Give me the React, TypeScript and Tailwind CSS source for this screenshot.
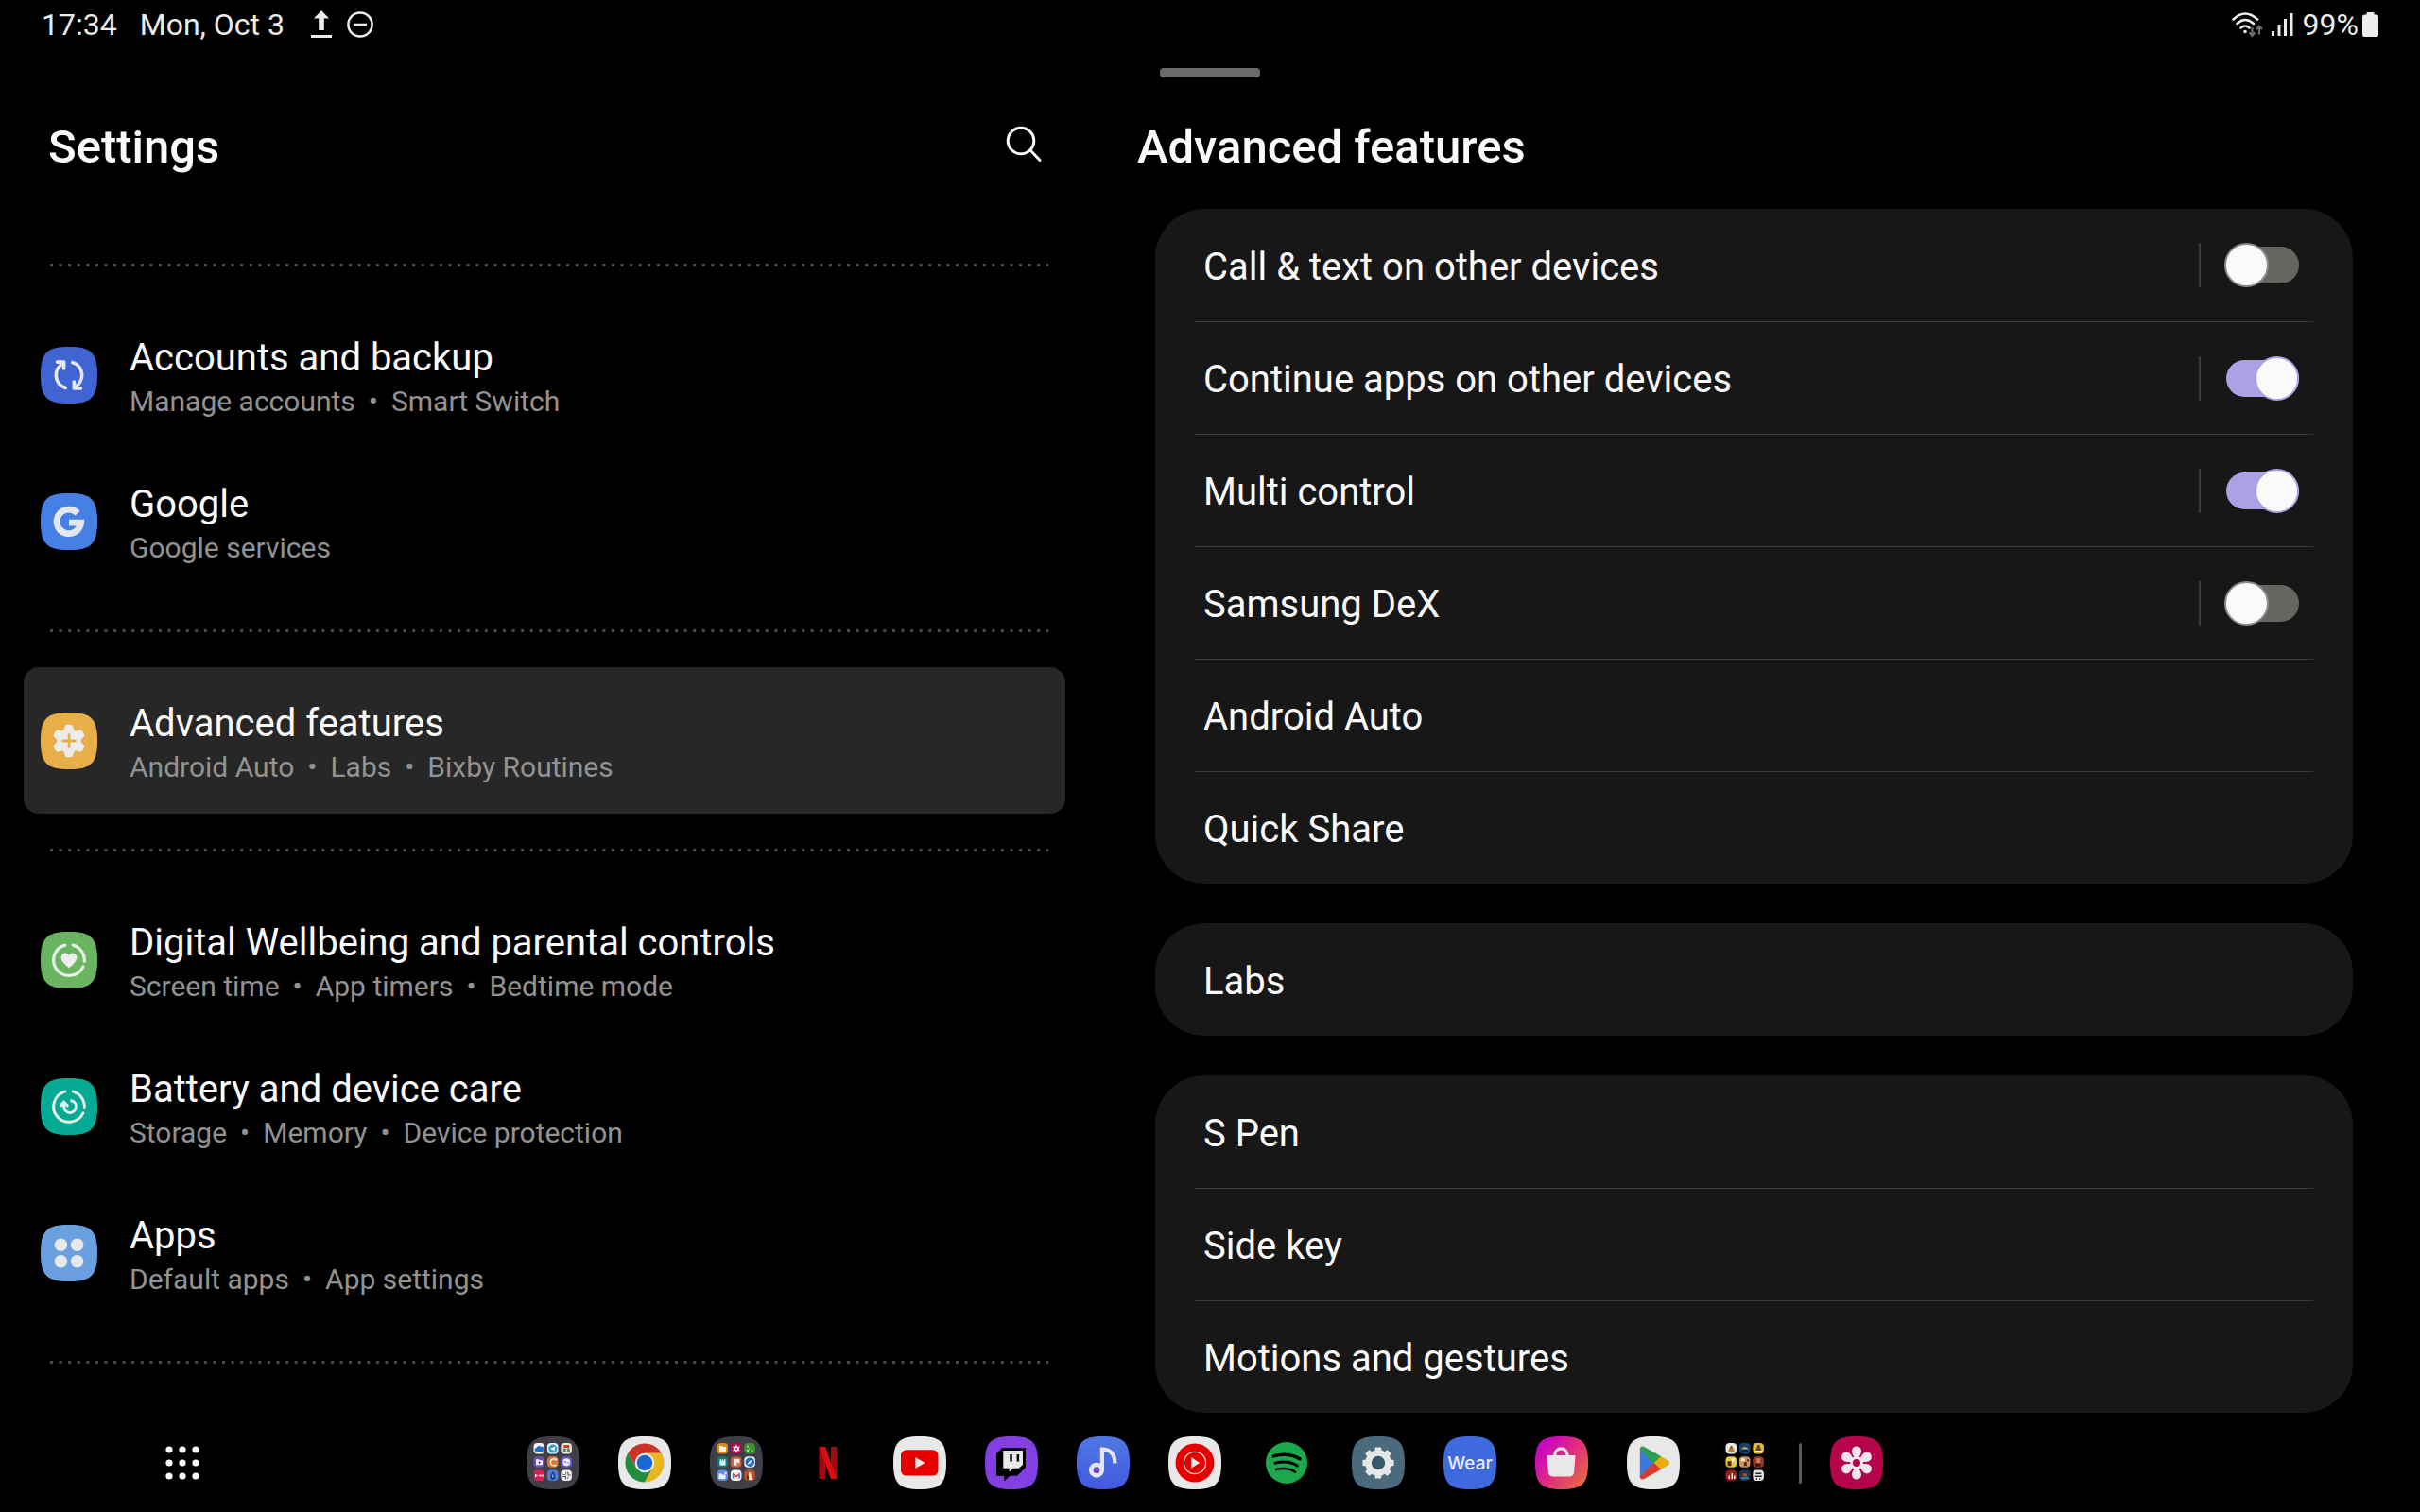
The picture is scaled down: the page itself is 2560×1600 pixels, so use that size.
import React, { useState } from 'react';

const SQUIRCLE = 'M0 28C0 6 6 0 28 0s28 6 28 28-6 28-28 28S0 50 0 28z';

function Tile({ fill, className = 'size-14', children }: { fill: string; className?: string; children?: React.ReactNode }) {
  return (
    <svg viewBox="0 0 56 56" className={className} aria-hidden="true">
      <path d={SQUIRCLE} fill={fill} />
      {children}
    </svg>
  );
}

/* ---------- settings list icons ---------- */

function AccountsIcon() {
  return (
    <Tile fill="#4065d3" className="size-15 shrink-0">
      <g fill="none" stroke="#e6e8f0" strokeWidth="3.4" strokeLinecap="round" strokeLinejoin="round">
        <path d="M24.5 40.6A13.2 13.2 0 0 1 22.5 16.2" />
        <path d="M16.4 15H23v6.4" />
        <path d="M31.5 15.4A13.2 13.2 0 0 1 33.5 39.8" />
        <path d="M39.6 41H33v-6.4" />
      </g>
    </Tile>
  );
}

function GoogleIcon() {
  return (
    <Tile fill="#4680e4" className="size-15 shrink-0">
      <path d="M36.5 19.7A11.9 11.9 0 1 0 39.7 29H28" fill="none" stroke="#e6e8f0" strokeWidth="6.4" />
    </Tile>
  );
}

function AdvancedIcon() {
  return (
    <Tile fill="#e8ae48" className="size-15 shrink-0">
      <g fill="#ebebeb">
        <circle cx="28" cy="28" r="11.8" />
        {[0, 60, 120, 180, 240, 300].map((a) => (
          <path key={a} d="M22.6 19l1.6-5.8q.4-1.4 1.8-1.4h4q1.400 0 1.800 1.400l1.600 5.800z" transform={`rotate(${a} 28 28)`} />
        ))}
      </g>
      <path d="M28 22v12M22 28h12" stroke="#e8ae48" strokeWidth="2.6" strokeLinecap="round" />
    </Tile>
  );
}

function Ring({ width }: { width: number }) {
  return (
    <g fill="none" stroke="#e4f2e4" strokeWidth={width} strokeLinecap="round">
      <path d="M24 13.2A15.3 15.3 0 1 0 41.9 34.5" />
      <path d="M32 13.2A15.3 15.3 0 0 1 43.2 29.3" />
    </g>
  );
}

function WellbeingIcon() {
  return (
    <Tile fill="#6bb462" className="size-15 shrink-0">
      <Ring width={3} />
      <path
        d="M28 35.6c-1.4-1-7.8-5.6-7.8-10.2 0-2.6 1.8-4.3 4-4.3 1.7 0 3 .9 3.8 2.3.8-1.4 2.1-2.3 3.8-2.3 2.2 0 4 1.7 4 4.3 0 4.6-6.4 9.2-7.8 10.2z"
        fill="#eeeeee"
      />
    </Tile>
  );
}

function BatteryCareIcon() {
  return (
    <Tile fill="#06a994" className="size-15 shrink-0">
      <Ring width={2.8} />
      <g fill="none" stroke="#e4f2f0" strokeWidth="2.8" strokeLinecap="round" strokeLinejoin="round">
        <path d="M23 25.5V28a6 6 0 1 0 7.5-5.8" />
        <path d="M19.8 27l3.2-3.6 3.4 3.6" />
      </g>
    </Tile>
  );
}

function AppsIcon() {
  return (
    <Tile fill="#6ba0e0" className="size-15 shrink-0">
      <g fill="#e6e8ec">
        <circle cx="20" cy="19.8" r="6.3" />
        <circle cx="36" cy="19.8" r="6.3" />
        <circle cx="20" cy="36.2" r="6.3" />
        <circle cx="36" cy="36.2" r="6.3" />
      </g>
    </Tile>
  );
}

/* ---------- dock icons ---------- */

type Mini = { bg: string; fg: string; d: string; fg2?: string; d2?: string };

// glyph paths are drawn inside a 12 x 12 cell
const workFolder: Mini[] = [
  { bg: '#f4f7fa', fg: '#1f6fc4', d: 'M3 9a2 2 0 0 1 0-4 3 3 0 0 1 5-1 2.5 2.5 0 0 1 1.5 5z' },
  { bg: '#e9f3f8', fg: '#2b9fd0', d: 'M6 1.5a4.5 4.5 0 1 1 0 9 4.5 4.5 0 0 1 0-9z', fg2: '#ffffff', d2: 'M3 6l5.5-2.5L7.5 8.5 5.5 7z' },
  { bg: '#efe9e2', fg: '#c8402f', d: 'M3 2h6v3H3z', fg2: '#5b8a6a', d2: 'M2.5 5.5h3v4h-3zM6.5 5.5h3v4h-3z' },
  { bg: '#6a4fb0', fg: '#f4f0fb', d: 'M2.5 3h3l1 1h3v5h-7z', fg2: '#6a4fb0', d2: 'M5.5 5h1v3h-1zM4.5 6h3v1h-3z' },
  { bg: '#e0702e', fg: '#f8e6d8', d: 'M11 3.5A4.5 4.5 0 1 0 10 9.5L8.5 8A2.5 2.5 0 1 1 9 5z' },
  { bg: '#6b52c2', fg: '#f1eefb', d: 'M6 2a4 4 0 1 1 0 8 4 4 0 0 1 0-8z', fg2: '#6b52c2', d2: 'M3 5.5q1.5-1 3 .5t3-.5v1q-1.5 1-3 0t-3 0z' },
  { bg: '#d81f52', fg: '#fbe4ea', d: 'M1.5 4.5h1.5v3H1.5zM4 5l1 1-1 1zM6 5h2v2H6zM8.8 5h2v2h-2z' },
  { bg: '#4f7fd8', fg: '#173a80', d: 'M6 1.5q3 3 2.5 6T6 10.5 3.5 8 6 1.5z', fg2: '#dfe9fb', d2: 'M5.5 5h1v3h-1z' },
  { bg: '#f2f2f2', fg: '#2fa67a', d: 'M5 2h1v3H5zM2 4.5h3v1H2zM7 7h1v3H7z', fg2: '#7a2a60', d2: 'M7 2h1v3H7zM7.5 5h3v1h-3zM2 6.5h3v1H2zM4.5 7h1v3h-1z' },
];

const toolsFolder: Mini[] = [
  { bg: '#d88a1c', fg: '#fdf3e0', d: 'M2.5 3h3l1 1h3v5h-7z' },
  { bg: '#b8084e', fg: '#fbe6ee', d: 'M6 1.5l1.2 2.3 2.7-.1L8.6 6l1.3 2.3-2.7-.1L6 10.5 4.8 8.2l-2.7.1L3.4 6 2.1 3.7l2.7.1z', fg2: '#b8084e', d2: 'M6 5a1 1 0 1 1 0 2 1 1 0 0 1 0-2z' },
  { bg: '#3f8f2c', fg: '#dff2d8', d: 'M3 2.5h1.2v2H3zM3 7h1.5v2H3zM7.5 7H9v2H7.5zM5 5.5h1v1H5z' },
  { bg: '#127a78', fg: '#dcf3f2', d: 'M3 3h6v6.5H3z', fg2: '#127a78', d2: 'M4.5 2.5h.8V5h-.8zM6.7 2.5h.8V5h-.8z' },
  { bg: '#cf5a36', fg: '#fcebe4', d: 'M3 2.5h6.5V7L7 9.5H3z', fg2: '#cf5a36', d2: 'M6.5 6.5h3L6.5 9.5z' },
  { bg: '#f0f4fa', fg: '#1f6fc4', d: 'M6 1.2a4.8 4.8 0 1 1 0 9.6 4.8 4.8 0 0 1 0-9.6z', fg2: '#ffffff', d2: 'M9 3L6.8 6.8 3 9l2.2-3.8z' },
  { bg: '#5f8fe0', fg: '#e8f0fd', d: 'M2 4h3l1 1h3v4.5H2z', fg2: '#e8f0fd', d2: 'M8 2.5h2v2H8z' },
  { bg: '#f4f4f4', fg: '#d93a2f', d: 'M2 3l4 3 4-3v2L6 8 2 5z', fg2: '#3a74d8', d2: 'M2 4.5h1.5V9H2zM8.5 4.5H10V9H8.5z' },
  { bg: '#b8502c', fg: '#f4d8c4', d: 'M5 2q3 1 2.5 4L9 10.5H4.5z', fg2: '#5a2414', d2: 'M3 6h1.5v4.5H3z' },
];

const gamesFolder: Mini[] = [
  { bg: '#ece8dc', fg: '#c87838', d: 'M3 7q3-6 6 0v2H3z', fg2: '#3c6a3a', d2: 'M5 3h2v3H5z' },
  { bg: '#184468', fg: '#c0a468', d: 'M2 6.5q4-5 8 0z', fg2: '#0c2438', d2: 'M3 7h6v2H3z' },
  { bg: '#e8b838', fg: '#5a4a3a', d: 'M5 2h2l2 6H3z', fg2: '#fdf6dc', d2: 'M2.5 8h7v1.5h-7z' },
  { bg: '#e8c83c', fg: '#5c1c14', d: 'M2 5h4v5H2z', fg2: '#fbf2d0', d2: 'M6.5 2H9v4H6.5z' },
  { bg: '#c8945c', fg: '#f4e4c8', d: 'M2 2h4v3H2z', fg2: '#4c2c1c', d2: 'M5 6h3v4H5zM8 3h2v2H8z' },
  { bg: '#8c3c28', fg: '#d87850', d: 'M4 2h4v5H4z', fg2: '#3c1410', d2: 'M3 7.5h5v3H3z' },
  { bg: '#981c1c', fg: '#f8e8e8', d: 'M3 6h1.5v3.5H3zM6 3.5h1.5v6H6zM8.5 6H10v3.5H8.5z' },
  { bg: '#1c3450', fg: '#a85040', d: 'M4 4h4v3H4z', fg2: '#5888b0', d2: 'M2 8h8v1.5H2z' },
  { bg: '#e4e4e4', fg: '#282828', d: 'M3 3h6v1.5H3zM2.5 6h7v1.5h-7z', fg2: '#484848', d2: 'M3.5 8.5h1.2v2H3.5zM7 8.5h1.2v2H7z' },
];

function Folder({ fill, items }: { fill: string; items: Mini[] }) {
  return (
    <Tile fill={fill}>
      {items.map((m, i) => (
        <g key={i} transform={`translate(${7.5 + (i % 3) * 14.4} ${7 + Math.floor(i / 3) * 14.2})`}>
          <rect width="11.6" height="11.6" rx="4" fill={m.bg} />
          <path d={m.d} fill={m.fg} />
          {m.d2 && <path d={m.d2} fill={m.fg2} />}
        </g>
      ))}
    </Tile>
  );
}

function ChromeIcon() {
  const slice = 'M45.8 17.8A20.5 20.5 0 0 0 10.3 17.7L19.2 33.1 28 28V17.8z';
  return (
    <Tile fill="#e8e8e8">
      <path d={slice} fill="#cc3327" />
      <path d={slice} fill="#1e8e3e" transform="rotate(-120 28 28)" />
      <path d={slice} fill="#e8b71c" transform="rotate(120 28 28)" />
      <circle cx="28" cy="28" r="10.3" fill="#e8e8e8" />
      <circle cx="28" cy="28" r="8.2" fill="#1967d2" />
    </Tile>
  );
}

function NetflixIcon() {
  return (
    <svg viewBox="0 0 56 56" className="size-14" aria-hidden="true">
      <rect x="18.5" y="11" width="6.5" height="34" fill="#a00a10" />
      <rect x="31" y="11" width="6.5" height="34" fill="#a00a10" />
      <path d="M18.5 11H25L37.5 45H31z" fill="#da0c14" />
    </svg>
  );
}

function YouTubeIcon() {
  return (
    <Tile fill="#e8e8e8">
      <rect x="8" y="14.3" width="39.5" height="27.2" rx="5.5" fill="#e60000" />
      <path d="M23.3 22v12L33.6 28z" fill="#e8e8e8" />
    </Tile>
  );
}

function TwitchIcon() {
  return (
    <Tile fill="#843fe2">
      <path d="M18 12.3H43V32.7L34 41.7H26.3L20.3 47.6V41.7H12V18.3z" fill="#000" />
      <path d="M19.3 15H40V30L35.7 33.7H29.7L25.7 37.7V33.7H19.3z" fill="#e8e8e8" />
      <path d="M26.3 19h2.5v7.4h-2.5zM33.6 19h2.5v7.4h-2.5z" fill="#000" />
    </Tile>
  );
}

function MusicIcon() {
  return (
    <Tile fill="url(#music)">
      <defs>
        <linearGradient id="music" x1="0" y1="0" x2="0" y2="1">
          <stop offset="0" stopColor="#4f78e4" />
          <stop offset="1" stopColor="#4259e0" />
        </linearGradient>
      </defs>
      <path d="M26.9 35.5V13.6C34.5 13.6 40.4 18 40.4 28.5" fill="none" stroke="#e4e6f2" strokeWidth="4.2" />
      <circle cx="21" cy="35.7" r="5.7" fill="#6a48b8" stroke="#e4e6f2" strokeWidth="4.6" />
    </Tile>
  );
}

function YouTubeMusicIcon() {
  return (
    <Tile fill="#e8e8e8">
      <circle cx="28" cy="28" r="20.5" fill="#e60000" />
      <circle cx="28" cy="28" r="11.6" fill="none" stroke="#f0dcdc" strokeWidth="1.3" />
      <path d="M24.3 22.3v11.2l9-5.6z" fill="#e8e8e8" />
    </Tile>
  );
}

function SpotifyIcon() {
  return (
    <svg viewBox="0 0 56 56" className="size-14" aria-hidden="true">
      <circle cx="28" cy="28" r="22" fill="#1ba94c" />
      <g fill="none" stroke="#000" strokeLinecap="round">
        <path d="M14.5 20.8Q30 16.6 42 23.8" strokeWidth="3.6" />
        <path d="M16 28.2Q29.5 24.8 39.4 31" strokeWidth="3" />
        <path d="M17 35Q28.5 32.3 37 37.6" strokeWidth="2.5" />
      </g>
    </svg>
  );
}

function SettingsIcon() {
  return (
    <Tile fill="#4b6a7d">
      <g fill="#e6e6e6">
        <circle cx="28" cy="28" r="13.8" />
        {[0, 45, 90, 135, 180, 225, 270, 315].map((a) => (
          <rect key={a} x="24.7" y="11.4" width="6.6" height="7" rx="1.2" transform={`rotate(${a} 28 28)`} />
        ))}
      </g>
      <circle cx="28" cy="28" r="7.2" fill="#35596b" />
    </Tile>
  );
}

function WearIcon() {
  return (
    <Tile fill="#3f69df">
      <text x="28" y="34.5" textAnchor="middle" fontSize="19" className="fill-[#e8ecf8] font-['Inter',sans-serif] font-medium">
        Wear
      </text>
    </Tile>
  );
}

function StoreIcon() {
  return (
    <Tile fill="url(#store)">
      <defs>
        <linearGradient id="store" x1="0" y1=".2" x2=".9" y2=".9">
          <stop offset="0" stopColor="#c400d0" />
          <stop offset=".5" stopColor="#e02a80" />
          <stop offset="1" stopColor="#e46844" />
        </linearGradient>
      </defs>
      <path d="M20.8 21v-1.5a6.6 6.6 0 0 1 13.2 0V21" fill="none" stroke="#ebe4ea" strokeWidth="3.2" />
      <path d="M12.5 20H42.5L41.2 37.5Q40.7 42.5 36 42.5H19Q14.3 42.5 13.8 37.5z" fill="#e8e8e8" />
    </Tile>
  );
}

function PlayIcon() {
  return (
    <Tile fill="#e8e8e8">
      <path d="M13.8 13v30L29.5 28z" fill="#3d78e0" />
      <path d="M13.8 13.5C13.8 10.8 16 9.8 18.2 11L36.5 21.2 28.6 28.8z" fill="#2e9e4c" />
      <path d="M13.8 42.5C13.8 45.2 16 46.2 18.2 45L36.5 34.8 28.6 27.4z" fill="#d83a30" />
      <path d="M36 21L43.4 25.4Q46.8 28 43.4 30.6L36 35 29 28z" fill="#e8ac10" />
    </Tile>
  );
}

function GalleryIcon() {
  return (
    <Tile fill="#b5044c">
      {[0, 60, 120, 180, 240, 300].map((a) => (
        <path
          key={a}
          d="M28 26C26 22 23 19 23 15.4a5 5 0 0 1 10 0C33 19 30 22 28 26z"
          fill="#eee6ea"
          transform={`rotate(${a} 28 28)`}
        />
      ))}
      <circle cx="28" cy="28" r="7" fill="#eee6ea" />
      <circle cx="28" cy="28" r="4" fill="#b5044c" />
    </Tile>
  );
}

const dockApps = [
  { name: 'Work folder', icon: <Folder fill="#3f3f48" items={workFolder} /> },
  { name: 'Chrome', icon: <ChromeIcon /> },
  { name: 'Tools folder', icon: <Folder fill="#3f3f48" items={toolsFolder} /> },
  { name: 'Netflix', icon: <NetflixIcon /> },
  { name: 'YouTube', icon: <YouTubeIcon /> },
  { name: 'Twitch', icon: <TwitchIcon /> },
  { name: 'Music', icon: <MusicIcon /> },
  { name: 'YouTube Music', icon: <YouTubeMusicIcon /> },
  { name: 'Spotify', icon: <SpotifyIcon /> },
  { name: 'Settings', icon: <SettingsIcon /> },
  { name: 'Galaxy Wearable', icon: <WearIcon /> },
  { name: 'Galaxy Store', icon: <StoreIcon /> },
  { name: 'Play Store', icon: <PlayIcon /> },
  { name: 'Games folder', icon: <Folder fill="#030303" items={gamesFolder} /> },
];

/* ---------- settings data ---------- */

const categoryGroups = [
  [
    { title: 'Accounts and backup', details: ['Manage accounts', 'Smart Switch'], icon: <AccountsIcon /> },
    { title: 'Google', details: ['Google services'], icon: <GoogleIcon /> },
  ],
  [{ title: 'Advanced features', details: ['Android Auto', 'Labs', 'Bixby Routines'], icon: <AdvancedIcon /> }],
  [
    { title: 'Digital Wellbeing and parental controls', details: ['Screen time', 'App timers', 'Bedtime mode'], icon: <WellbeingIcon /> },
    { title: 'Battery and device care', details: ['Storage', 'Memory', 'Device protection'], icon: <BatteryCareIcon /> },
    { title: 'Apps', details: ['Default apps', 'App settings'], icon: <AppsIcon /> },
  ],
];

const featureGroups: { label: string; toggle?: boolean }[][] = [
  [
    { label: 'Call & text on other devices', toggle: false },
    { label: 'Continue apps on other devices', toggle: true },
    { label: 'Multi control', toggle: true },
    { label: 'Samsung DeX', toggle: false },
    { label: 'Android Auto' },
    { label: 'Quick Share' },
  ],
  [{ label: 'Labs' }],
  [{ label: 'S Pen' }, { label: 'Side key' }, { label: 'Motions and gestures' }],
];

function StatusBar() {
  return (
    <header className="flex h-[60px] items-start justify-between pt-2 pr-11 pl-11 text-[32px] leading-9 text-[#ececec]">
      <div className="flex items-center">
        <span>17:34</span>
        <span className="ml-6">Mon, Oct 3</span>
        <svg viewBox="0 0 22 30" className="ml-7 h-[30px] w-[22px]" fill="#ececec" aria-hidden="true">
          <path d="M11 0l8 8.5h-5.2V21H8.2V8.5H3zM0 26h22v3H0z" />
        </svg>
        <svg viewBox="0 0 28 28" className="ml-4 size-7" fill="none" stroke="#ececec" strokeWidth="2.5" aria-hidden="true">
          <circle cx="14" cy="14" r="12.6" />
          <path d="M7 14h14" />
        </svg>
      </div>
      <div className="flex items-center">
        <svg viewBox="0 0 34 28" className="h-7 w-[34px]" aria-hidden="true">
          <g fill="none" stroke="#ececec" strokeWidth="2.6" strokeLinecap="round">
            <path d="M1.5 8.5Q14 -3.5 27 8.5" />
            <path d="M5.5 13Q14 5 23 13" />
            <path d="M9.5 17.5Q14 13.5 18.5 17.5" />
          </g>
          <circle cx="14" cy="21.5" r="1.8" fill="#ececec" />
          <path d="M21.5 17v8.5M18.5 22.5l3 3.3 3-3.3M29 24.5V16M26 19l3-3.3 3 3.3" fill="none" stroke="#6e6e6e" strokeWidth="2.2" />
        </svg>
        <svg viewBox="0 0 23 26" className="ml-2 h-[26px] w-[23px]" fill="#ececec" aria-hidden="true">
          <path d="M0 20h3v5H0zM6.5 13h3v12h-3zM13 7h3v18h-3zM19.5 1h3v24h-3z" />
        </svg>
        <span className="ml-2.5">99%</span>
        <svg viewBox="0 0 17 26" className="ml-1 h-[26px] w-[17px]" fill="#ececec" aria-hidden="true">
          <path d="M5.5 0h6Q12.5 0 12.5 1.2V2.5H14.5Q17 2.5 17 5V23.5Q17 26 14.5 26H2.5Q0 26 0 23.5V5Q0 2.5 2.5 2.5H4.5V1.2Q4.5 0 5.5 0z" />
        </svg>
      </div>
    </header>
  );
}

function DottedDivider() {
  return (
    <div className="flex h-[77px] items-center pr-[18px] pl-7" role="separator">
      <svg className="h-[3px] w-full" aria-hidden="true">
        <line x1="0" y1="1.5" x2="100%" y2="1.5" stroke="#4a4a4a" strokeWidth="3" strokeDasharray="3 6.58" />
      </svg>
    </div>
  );
}

function Toggle({ id, label, defaultOn }: { id: string; label: string; defaultOn: boolean }) {
  const [on, setOn] = useState(defaultOn);

  return (
    <div className="flex items-center gap-[27px] pr-[15px]">
      <span className="h-[47px] w-0.5 bg-[#3b3b3b]" />
      <input
        id={id}
        type="checkbox"
        role="switch"
        aria-label={label}
        checked={on}
        onChange={() => setOn(!on)}
        className="relative h-[39px] w-[77px] cursor-pointer appearance-none rounded-full bg-[#65665f] before:absolute before:-top-1 before:-left-0.5 before:size-[47px] before:rounded-full before:border-2 before:border-[#8c8c88] before:bg-[#fafafa] checked:bg-[#aca1e4] checked:before:left-[30px] checked:before:border-[#aca1e4]"
      />
    </div>
  );
}

export default function App() {
  const [selected, setSelected] = useState('Advanced features');

  return (
    <div className="flex min-h-screen flex-col bg-black font-['Roboto',sans-serif] text-[#fafafa]">
      <StatusBar />
      <div className="flex h-[22px] items-end justify-center">
        <div className="h-2.5 w-[106px] rounded bg-[#6b6b6b]" />
      </div>

      <main className="flex flex-1">
        <section className="w-[45%] px-[25px]">
          <div className="flex h-[139px] items-center justify-between pt-[7px] pr-6 pl-[26px]">
            <h1 className="text-[49px] leading-none font-medium">Settings</h1>
            <button type="button" aria-label="Search" className="cursor-pointer">
              <svg viewBox="0 0 40 44" className="h-11 w-10" fill="none" stroke="#fafafa" strokeWidth="3" strokeLinecap="round" aria-hidden="true">
                <circle cx="17" cy="16" r="13.8" />
                <path d="M27 26l10 10.5" />
              </svg>
            </button>
          </div>

          <nav className="mt-[21px]">
            <DottedDivider />
            {categoryGroups.map((group) => (
              <div key={group[0].title}>
                {group.map((item) => (
                  <button
                    key={item.title}
                    type="button"
                    onClick={() => setSelected(item.title)}
                    className={`flex h-[155px] w-full cursor-pointer items-center gap-[34px] rounded-2xl pl-[18px] text-left ${
                      selected === item.title ? 'bg-[#272727]' : ''
                    }`}
                  >
                    {item.icon}
                    <span className="flex flex-col pt-1.5">
                      <span className="text-[40px] leading-[50px]">{item.title}</span>
                      <span className="flex text-[30px] leading-[42px] text-[#929292]">
                        {item.details.map((detail, i) => (
                          <React.Fragment key={detail}>
                            {i > 0 && <span className="px-3.5">•</span>}
                            <span>{detail}</span>
                          </React.Fragment>
                        ))}
                      </span>
                    </span>
                  </button>
                ))}
                <DottedDivider />
              </div>
            ))}
          </nav>
        </section>

        <section className="flex-1 pr-[71px] pl-[51px]">
          <div className="flex h-[139px] items-center pt-[7px]">
            <h2 className="text-[49px] leading-none font-medium">Advanced features</h2>
          </div>
          <div className="ml-[19px] flex flex-col gap-[42px]">
            {featureGroups.map((group) => (
              <ul key={group[0].label} className="rounded-[52px] bg-[#171717] px-[42px]">
                {group.map((item) => (
                  <li key={item.label} className="flex h-[119px] items-center border-[#3a3a3a] not-first:border-t">
                    <button type="button" className="h-full flex-1 cursor-pointer pt-1 pl-[9px] text-left text-[40px] leading-[50px]">
                      {item.label}
                    </button>
                    {item.toggle !== undefined && (
                      <Toggle id={item.label.replace(/\W+/g, '-')} label={item.label} defaultOn={item.toggle} />
                    )}
                  </li>
                ))}
              </ul>
            ))}
          </div>
        </section>
      </main>

      <footer className="grid h-[104px] grid-cols-[1fr_auto_1fr] items-center pr-3">
        <button type="button" aria-label="All apps" className="ml-[173px] w-10 cursor-pointer">
          <svg viewBox="0 0 40 40" className="size-10" fill="#fff" aria-hidden="true">
            {[6, 20, 34].map((y) => [6, 20, 34].map((x) => <circle key={`${x}-${y}`} cx={x} cy={y} r="3.6" />))}
          </svg>
        </button>
        <div className="flex items-center gap-[41px]">
          {dockApps.map((app) => (
            <button key={app.name} type="button" aria-label={app.name} className="cursor-pointer">
              {app.icon}
            </button>
          ))}
          <div className="flex items-center gap-[30px]">
            <span className="-ml-3 h-[43px] w-[3px] rounded-full bg-[#5a5a5a]" />
            <button type="button" aria-label="Gallery" className="cursor-pointer">
              <GalleryIcon />
            </button>
          </div>
        </div>
      </footer>
    </div>
  );
}
